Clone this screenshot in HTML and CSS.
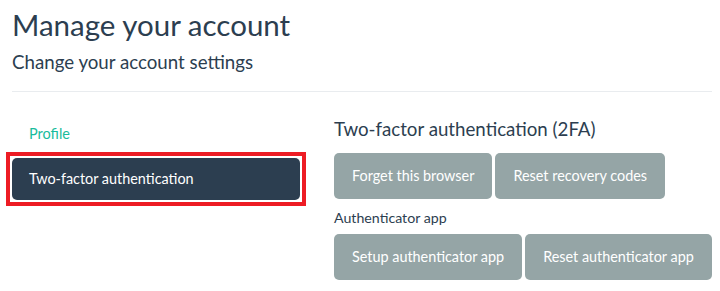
FILE: index.html
```html
<!DOCTYPE html>
<html lang="en">

<head>
    <meta charset="UTF-8" />
    <meta name="viewport" content="width=device-width, initial-scale=1.0" />
    <title>Manage your account</title>
    <link rel="stylesheet" href="styles.css">
</head>

<body>
    <div class="page">
        <header class="page-header">
            <h1>Manage your account</h1>
            <h2>Change your account settings</h2>
        </header>

        <hr />

        <div class="manage">
            <nav class="side-nav">
                <a href="#" class="nav-link">Profile</a>
                <a href="#" class="nav-link active">Two-factor authentication</a>
            </nav>

            <main class="content">
                <h3>Two-factor authentication (2FA)</h3>
                <div class="btn-row">
                    <button class="btn">Forget this browser</button>
                    <button class="btn">Reset recovery codes</button>
                </div>

                <p class="section-label">Authenticator app</p>
                <div class="btn-row">
                    <button class="btn">Setup authenticator app</button>
                    <button class="btn">Reset authenticator app</button>
                </div>
            </main>
        </div>
    </div>
</body>

</html>
```

FILE: styles.css
```css
body {
    font-family: Lato, "Liberation Sans", sans-serif;
    margin: 0;
    background-color: #fff;
    color: #2c3e50;
}

.page {
    padding: 0 8px 0 12px;
}

.page-header h1 {
    font-size: 29.5px;
    font-weight: 400;
    line-height: 38px;
    margin: 6px 0 0 0;
}

.page-header h2 {
    font-size: 18.7px;
    font-weight: 400;
    line-height: 26px;
    margin: 5px 0 0 0;
}

hr {
    border: none;
    border-top: 1px solid #e9ecef;
    margin: 16px 0 0 0;
}

.manage {
    display: grid;
    grid-template-columns: 288px 1fr;
    gap: 34px;
    margin-top: 21px;
}

.side-nav {
    display: flex;
    flex-direction: column;
    gap: 3px;
}

.nav-link {
    display: block;
    padding: 10px 17px;
    font-size: 14.5px;
    line-height: 22px;
    color: #18bc9c;
    text-decoration: none;
    border-radius: 5px;
}

.nav-link.active {
    position: relative;
    background-color: #2c3e50;
    color: #fff;
    font-size: 14.4px;
}

/* red highlight frame round the active item */
.nav-link.active::before {
    content: "";
    position: absolute;
    top: -6px;
    left: -6px;
    right: -6px;
    bottom: -6px;
    border: 4px solid #ed1c24;
}

.content {
    padding-top: 3px;
}

.content h3 {
    font-size: 18.7px;
    font-weight: 400;
    line-height: 26px;
    margin: 0 0 11px 0;
}

.btn-row {
    display: flex;
    gap: 3px;
}

.btn {
    font-family: inherit;
    font-size: 14.4px;
    line-height: 22px;
    height: 46px;
    padding: 12px 18px;
    color: #fff;
    background-color: #95a5a6;
    border: none;
    border-radius: 5px;
    white-space: nowrap;
    cursor: pointer;
}

.section-label {
    font-size: 14.2px;
    line-height: 22px;
    margin: 8px 0 5px 0;
}
```
